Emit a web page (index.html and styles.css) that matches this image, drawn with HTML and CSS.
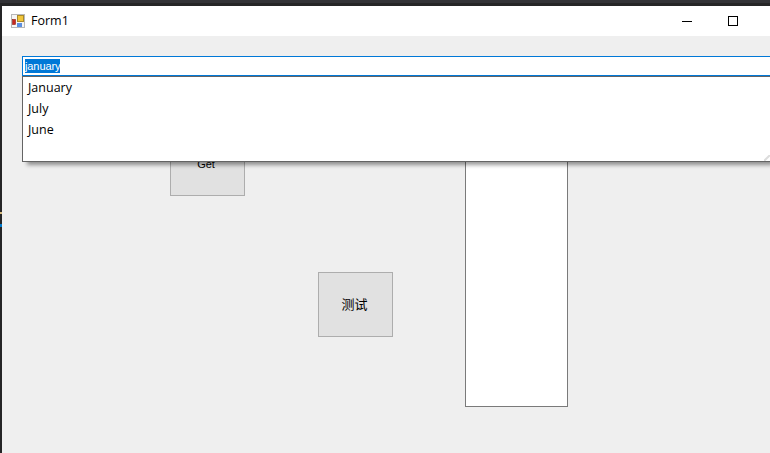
FILE: index.html
```html
<!DOCTYPE html>
<html lang="en">
<head>
<meta charset="UTF-8" />
<meta name="viewport" content="width=device-width, initial-scale=1" />
<title>Form1</title>
<link rel="stylesheet" href="styles.css">
</head>
<body>

<!-- Bits of the editor behind the form -->
<span class="edge-mark edge-yellow"></span>
<span class="edge-mark edge-blue"></span>

<div class="window">

  <!-- Title bar -->
  <div class="titlebar">
    <svg class="app-icon" width="14" height="14" viewBox="0 0 14 14">
      <rect x="0.5" y="0.5" width="13" height="13" fill="#f6f6f6" stroke="#b8b8b8" />
      <rect x="1.5" y="5.5" width="3" height="5" fill="#c8281e" stroke="#8e1c14" stroke-width="0.6" />
      <rect x="6.5" y="1.5" width="6" height="6" fill="#f2c63a" stroke="#a98a2a" />
      <rect x="6" y="9" width="5" height="4" fill="#5c8fe0" />
    </svg>
    <span class="title">Form1</span>
    <div class="caption-btn">
      <span class="min-glyph"></span>
    </div>
    <div class="caption-btn">
      <span class="max-glyph"></span>
    </div>
  </div>

  <!-- Form canvas -->
  <div class="client">
    <button class="btn btn-get">Get</button>
    <button class="btn btn-test">测试</button>
    <div class="listbox"></div>

    <div class="combo">
      <div class="combo-input"><span class="selected">january</span></div>
      <div class="combo-list">
        <div class="combo-item">January</div>
        <div class="combo-item">July</div>
        <div class="combo-item">June</div>
        <svg class="grip" width="6" height="6" viewBox="0 0 6 6">
          <path d="M0 6 L6 0" stroke="#dcdcdc" stroke-width="2" />
        </svg>
      </div>
    </div>
  </div>

</div>

</body>
</html>
```

FILE: styles.css
```css
html, body {
  margin: 0;
  height: 100%;
  width: 100%;
  overflow: hidden;
  background: #252526;
  font-family: 'Open Sans', 'Noto Sans', 'Liberation Sans', sans-serif;
}

body {
  border-top: 3px solid #333337;
  box-sizing: border-box;
}

.edge-mark {
  position: absolute;
  left: 0;
  width: 2px;
  height: 2px;
}

.edge-yellow {
  top: 212px;
  background: #d7ba7d;
}

.edge-blue {
  top: 224px;
  height: 3px;
  background: #007acc;
}

.window {
  display: flex;
  flex-direction: column;
  height: 447px;
  margin: 3px 0 0 2px;
}

.titlebar {
  display: flex;
  align-items: center;
  height: 30px;
  flex-shrink: 0;
  background: #fff;
  padding-left: 9px;
  font-size: 12.5px;
  color: #000;
}

.app-icon {
  margin-right: 6px;
}

.title {
  flex: 1;
  margin-top: -1px;
}

.caption-btn {
  display: flex;
  align-items: center;
  justify-content: center;
  width: 46px;
  height: 30px;
}

.caption-btn:last-child {
  margin-right: 14px;
}

.min-glyph {
  width: 10px;
  height: 1px;
  background: #000;
}

.max-glyph {
  width: 8px;
  height: 8px;
  border: 1px solid #000;
}

.client {
  position: relative;
  flex: 1;
  background: #efefef;
}

.btn {
  position: absolute;
  box-sizing: border-box;
  margin: 0;
  padding: 0;
  background: #e1e1e1;
  border: 1px solid #adadad;
  font-family: 'Liberation Sans', 'Noto Sans CJK SC', sans-serif;
  color: #000;
}

.btn-get {
  left: 168px;
  top: 95px;
  width: 75px;
  height: 65px;
  padding-right: 3px;
  font-size: 11px;
}

.btn-test {
  left: 316px;
  top: 236px;
  width: 75px;
  height: 65px;
  padding: 0 2px 2px 0;
  font-size: 13px;
}

.listbox {
  position: absolute;
  left: 463px;
  top: 110px;
  width: 103px;
  height: 261px;
  box-sizing: border-box;
  background: #fff;
  border: 1px solid #7a7a7a;
}

.combo {
  position: absolute;
  left: 20px;
  top: 20px;
  right: 0;
  font-size: 12.5px;
}

.combo-input {
  box-sizing: border-box;
  height: 20px;
  padding: 1px 0 0 2px;
  background: #fff;
  border: 1px solid #0078d7;
  border-right: none;
  line-height: 16px;
}

.selected {
  display: inline-block;
  height: 14px;
  line-height: 14px;
  background: #0078d7;
  color: #fff;
  font-family: 'Liberation Sans', sans-serif;
  font-size: 11px;
  letter-spacing: -0.1px;
}

.combo-list {
  position: relative;
  box-sizing: border-box;
  height: 86px;
  padding: 0 0 0 5px;
  background: #fff;
  border: 1px solid #646464;
  border-right: none;
  box-shadow: 4px 4px 4px -1px rgba(0, 0, 0, 0.4);
}

.combo-item {
  height: 21px;
  line-height: 21px;
  color: #000;
}

.grip {
  position: absolute;
  right: 0;
  bottom: 0;
}
```
